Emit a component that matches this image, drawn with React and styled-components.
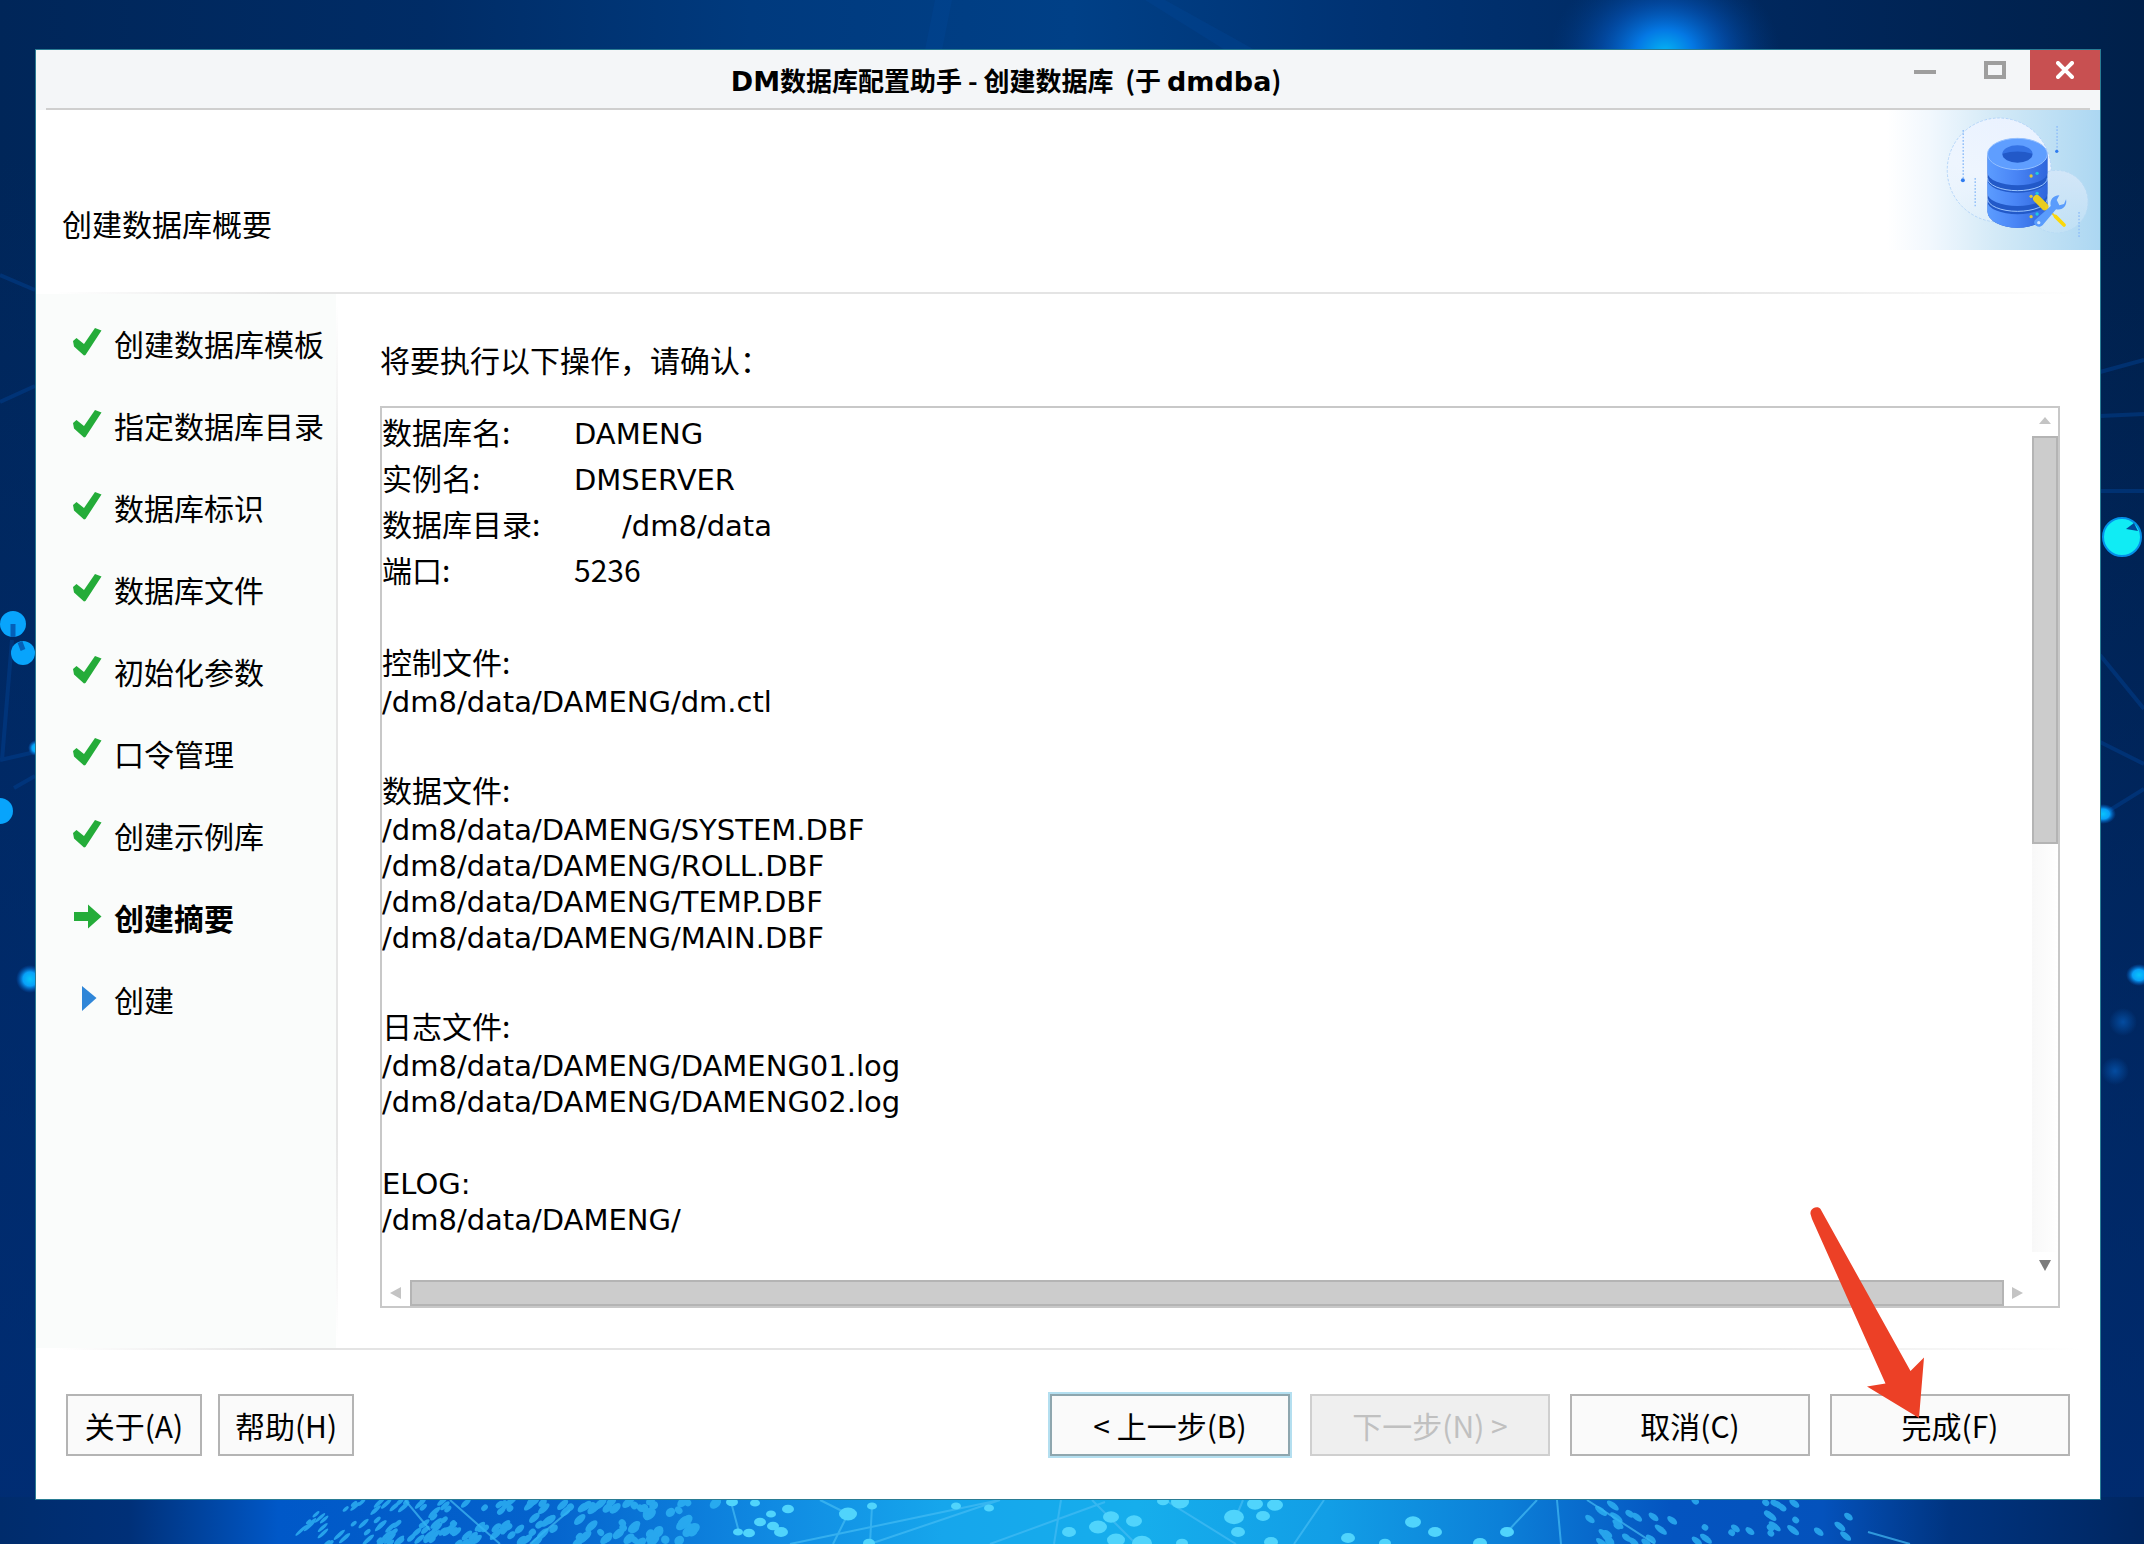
import React from 'react';
import styled, { createGlobalStyle, css } from 'styled-components';

const GlobalStyle = createGlobalStyle`
  * {
    box-sizing: border-box;
  }
  body {
    margin: 0;
    background-color: #00285f;
    font-family: 'Noto Sans CJK SC', sans-serif;
    font-size: 30px;
    color: #000;
  }
`;

const Desktop = styled.div`
  position: relative;
  display: flex;
  min-height: 100vh;
  padding: 49px 43px 44px 35px;
`;

const WallpaperSvg = styled.svg`
  position: absolute;
  inset: 0;
  width: 100%;
  height: 100%;
`;

const Window = styled.main`
  position: relative;
  flex: 1;
  min-width: 0;
  display: flex;
  flex-direction: column;
  border: 1px solid #2a7c93;
  background-color: #fff;
`;

const TitleBar = styled.header`
  background-color: #f4f6f8;
`;

const TitleRow = styled.div`
  display: flex;
  height: 58px;
`;

const Title = styled.h1`
  flex: 1;
  margin: 0;
  padding-left: 86px;
  font-size: 26px;
  font-weight: bold;
  line-height: 60px;
  text-align: center;
  white-space: pre;
`;

const TitleLatin = styled.span`
  font-family: 'DejaVu Sans', sans-serif;
  font-size: 27px;
`;

const TitleRule = styled.div`
  height: 2px;
  margin: 0 10px;
  background-color: #cfcfcf;
`;

const ControlButton = styled.button`
  display: flex;
  align-items: center;
  justify-content: center;
  width: 70px;
  height: 40px;
  padding: 0;
  border: 0;
  background-color: ${(props) => (props.$close ? '#c85051' : 'transparent')};
`;

const Header = styled.section`
  display: flex;
  justify-content: space-between;
  height: 182px;
  padding-left: 26px;
`;

const Heading = styled.h2`
  align-self: flex-end;
  margin: 0 0 47px;
  font-size: 30px;
  font-weight: normal;
  line-height: 44px;
`;

const Banner = styled.svg`
  width: 213px;
  height: 140px;
`;

const Divider = styled.div`
  height: 2px;
  background: linear-gradient(to right, transparent 1%, #e4e4e4 12%, #e4e4e4 80%, transparent 99%);
`;

const Body = styled.div`
  flex: 1;
  display: flex;
`;

const Sidebar = styled.nav`
  width: 300px;
  padding-top: 8px;
  background-color: #fafcfb;
`;

const SidebarRule = styled.div`
  width: 2px;
  background: linear-gradient(to bottom, transparent 1%, #e6e6e6 20%, #e6e6e6 80%, transparent 99%);
`;

const StepList = styled.ol`
  margin: 0;
  padding: 0;
  list-style: none;
`;

const Step = styled.li`
  display: flex;
  align-items: center;
  gap: 12px;
  height: 82px;
  padding-left: 36px;
  font-weight: ${(props) => (props.$current ? 'bold' : 'normal')};
  white-space: nowrap;
`;

const StepIcon = styled.svg`
  width: 30px;
  height: 30px;
  margin-bottom: 2px;
`;

const Content = styled.section`
  flex: 1;
  min-width: 0;
  display: flex;
  flex-direction: column;
  gap: 25px;
  padding: 43px 40px 40px 42px;
`;

const Prompt = styled.p`
  margin: 0;
  line-height: 44px;
`;

const SummaryBox = styled.div`
  flex: 1;
  display: grid;
  grid-template-columns: 1fr 26px;
  grid-template-rows: 1fr 26px;
  border: 2px solid #c8c8c8;
`;

const SummaryText = styled.div`
  overflow: hidden;
  outline: none;
`;

const Line = styled.div`
  height: 46px;
  line-height: 46px;
  white-space: pre;
  tab-size: 48px;
`;

const PathLine = styled(Line)`
  height: 36px;
  line-height: 36px;
  font-family: 'DejaVu Sans', sans-serif;
  font-size: 29px;
`;

const Value = styled.span`
  font-family: 'DejaVu Sans', sans-serif;
  font-size: 29px;
`;

const ScrollBar = styled.div`
  display: flex;
  flex-direction: ${(props) => (props.$vertical ? 'column' : 'row')};
`;

const ScrollTrack = styled.div`
  flex: 1;
  background: ${(props) =>
    props.$vertical ? 'linear-gradient(to right, #f8f8f8, #fff)' : '#fff'};
`;

const ScrollThumb = styled.div`
  width: ${(props) => (props.$vertical ? '100%' : `${props.$size}%`)};
  height: ${(props) => (props.$vertical ? `${props.$size}%` : '100%')};
  border: 2px solid #b4b4b4;
  background-color: #cccccc;
`;

const ScrollButton = styled.button`
  display: flex;
  align-items: center;
  justify-content: center;
  width: ${(props) => (props.$vertical ? '26px' : '28px')};
  height: ${(props) => (props.$vertical ? '28px' : '26px')};
  padding: 0;
  border: 0;
  background: none;
`;

const Footer = styled.footer`
  display: flex;
  justify-content: space-between;
  padding: 44px 30px 43px;
`;

const ButtonGroup = styled.div`
  display: flex;
  gap: ${(props) => props.$gap};
`;

const FooterButton = styled.button`
  width: ${(props) => (props.$wide ? '240px' : '136px')};
  height: 62px;
  padding: 0;
  border: 2px solid #b4b4b4;
  background-color: #fafafa;
  font-family: inherit;
  font-size: 30px;
  line-height: 44px;
  color: #000;
  white-space: nowrap;
  ${(props) =>
    props.$focused &&
    css`
      border-color: #8ea6ae;
      box-shadow: 0 0 0 2px #b4dff0;
    `}
  &:disabled {
    border-color: #cfcfcf;
    background-color: #efefef;
    color: #c0c0c0;
  }
`;

const Pointed = styled.div`
  position: relative;
`;

const PointerArrow = styled.svg`
  position: absolute;
  left: -30px;
  bottom: 36px;
  width: 130px;
  height: 220px;
  pointer-events: none;
`;

const steps = [
  { label: '创建数据库模板', state: 'done' },
  { label: '指定数据库目录', state: 'done' },
  { label: '数据库标识', state: 'done' },
  { label: '数据库文件', state: 'done' },
  { label: '初始化参数', state: 'done' },
  { label: '口令管理', state: 'done' },
  { label: '创建示例库', state: 'done' },
  { label: '创建摘要', state: 'current' },
  { label: '创建', state: 'next' },
];

const summary = [
  { label: '数据库名:\t\t', value: 'DAMENG' },
  { label: '实例名:\t\t', value: 'DMSERVER' },
  { label: '数据库目录:\t\t', value: '/dm8/data' },
  { label: '端口:\t\t\t5236' },
  { label: '' },
  { label: '控制文件:' },
  { path: '/dm8/data/DAMENG/dm.ctl' },
  { label: '' },
  { label: '数据文件:' },
  { path: '/dm8/data/DAMENG/SYSTEM.DBF' },
  { path: '/dm8/data/DAMENG/ROLL.DBF' },
  { path: '/dm8/data/DAMENG/TEMP.DBF' },
  { path: '/dm8/data/DAMENG/MAIN.DBF' },
  { label: '' },
  { label: '日志文件:' },
  { path: '/dm8/data/DAMENG/DAMENG01.log' },
  { path: '/dm8/data/DAMENG/DAMENG02.log' },
  { label: '' },
  { path: 'ELOG:' },
  { path: '/dm8/data/DAMENG/' },
];

const stepShapes = {
  done: <path d="M1 14 4.500 11 12 17 23 1 29.500 3.500 13.500 28 12 28.500 2 19.500Z" fill="#24ac39" />,
  current: <path d="M2 11H16V3.500L29.500 15.500 16 27.500V20H2Z" fill="#24ac39" />,
  next: <path d="M10 3 24.500 15 10 28Z" fill="#2f86d8" />,
};

const triangles = {
  up: 'M6 1 12 8H0Z',
  down: 'M0 0H12L6 11Z',
  left: 'M0 6 11 0V12Z',
  right: 'M11 6 0 0V12Z',
};

const Triangle = ({ dir, color }) => (
  <svg width="12" height="12" viewBox="0 0 12 12">
    <path d={triangles[dir]} fill={color} />
  </svg>
);

// cx, cy, rx of the bright nodes along the bottom edge
const nodes = [
  [732, 1502, 6], [755, 1503, 5], [771, 1514, 5], [788, 1509, 6], [760, 1522, 6],
  [773, 1526, 6], [738, 1532, 5], [749, 1533, 6], [781, 1532, 7], [848, 1514, 9],
  [872, 1506, 5], [869, 1543, 6], [956, 1506, 5], [989, 1508, 5], [1069, 1532, 7],
  [1098, 1527, 9], [1111, 1517, 8], [1134, 1521, 8], [1116, 1540, 9], [1142, 1543, 10],
  [1163, 1501, 6], [1180, 1502, 9], [1182, 1543, 6], [1234, 1517, 10], [1255, 1504, 8],
  [1275, 1505, 8], [1263, 1516, 7], [1238, 1532, 7], [1271, 1542, 7], [1413, 1522, 8],
  [1435, 1532, 7], [1348, 1538, 7], [1385, 1543, 6], [1480, 1543, 7], [1507, 1532, 7],
];

// flattened specks that crowd towards both ends of the globe
const random = (n) => {
  const v = Math.sin(n * 127.1 + 11.7) * 43758.5453;
  return v - Math.floor(v);
};

const specks = Array.from({ length: 215 }, (_, i) => {
  const left = i % 5 !== 0;
  const y = 1500 + random(i + 500) * 46;
  const spread = random(i);
  return {
    left,
    y,
    x: left ? 325 - (y - 1500) + spread * 400 : 1580 + spread * 270,
    rx: 3 + random(i + 900) * 5,
    ry: left ? 1.5 + spread * 3 : 3,
  };
});

const Wallpaper = () => (
  <WallpaperSvg viewBox="0 0 2144 1544" preserveAspectRatio="none" aria-hidden="true">
    <defs>
      <linearGradient id="sky" x1="0" x2="1" y1="0" y2="0">
        <stop offset="0" stopColor="#002659" />
        <stop offset=".2" stopColor="#002c66" />
        <stop offset=".35" stopColor="#003a7e" />
        <stop offset=".5" stopColor="#004087" />
        <stop offset=".63" stopColor="#003374" />
        <stop offset=".85" stopColor="#00265a" />
        <stop offset="1" stopColor="#00204a" />
      </linearGradient>
      <linearGradient id="deep" x1="0" x2="0" y1="0" y2="1">
        <stop offset=".1" stopColor="#003080" stopOpacity="0" />
        <stop offset="1" stopColor="#003080" stopOpacity=".7" />
      </linearGradient>
      <radialGradient id="flare">
        <stop offset="0" stopColor="#04b4f4" />
        <stop offset=".25" stopColor="#0478e4" />
        <stop offset=".55" stopColor="#0458c0" stopOpacity=".6" />
        <stop offset="1" stopColor="#003a86" stopOpacity="0" />
      </radialGradient>
      <radialGradient id="spark">
        <stop offset="0" stopColor="#08c4fc" />
        <stop offset=".5" stopColor="#08a0f8" />
        <stop offset="1" stopColor="#0460d0" stopOpacity="0" />
      </radialGradient>
      <radialGradient id="haze">
        <stop offset="0" stopColor="#044ca0" />
        <stop offset="1" stopColor="#044ca0" stopOpacity="0" />
      </radialGradient>
      <linearGradient id="globe" x1="0" x2="1" y1="0" y2="0">
        <stop offset="0" stopColor="#002c6c" />
        <stop offset=".06" stopColor="#003078" />
        <stop offset=".13" stopColor="#0058c8" />
        <stop offset=".25" stopColor="#0462cc" />
        <stop offset=".36" stopColor="#108ae2" />
        <stop offset=".44" stopColor="#16a6ec" />
        <stop offset=".53" stopColor="#16aeec" />
        <stop offset=".62" stopColor="#129ee6" />
        <stop offset=".7" stopColor="#0c80d8" />
        <stop offset=".78" stopColor="#0454c0" />
        <stop offset=".85" stopColor="#0452bc" />
        <stop offset=".91" stopColor="#003480" />
        <stop offset="1" stopColor="#002660" />
      </linearGradient>
    </defs>
    <rect width="2144" height="1544" fill="url(#sky)" />
    <rect width="2144" height="1544" fill="url(#deep)" />
    <path d="M925 50 935 0H952L942 50ZM1145 0H1165L1255 50H1225Z" fill="#00489a" opacity=".3" />
    <ellipse cx="1665" cy="52" rx="115" ry="90" fill="url(#flare)" />
    <rect y="1497" width="2144" height="47" fill="url(#globe)" />
    <g stroke="#003f90" strokeWidth="4" fill="none" opacity=".5">
      <path d="M0 275 35 290M0 402 35 386M12 640 2 760M0 760 35 752M14 788 35 776" />
      <path d="M2100 416 2144 414M2100 372 2144 360M2100 491 2144 491M2100 655 2144 709M2100 742 2144 764M2102 815 2144 789" />
    </g>
    <g fill="#08a4fc">
      <circle cx="13" cy="624" r="13" />
      <circle cx="23" cy="653" r="12" />
      <circle cx="0" cy="811" r="13" />
    </g>
    <circle cx="36" cy="748" r="8" fill="url(#spark)" />
    <circle cx="30" cy="979" r="14" fill="url(#spark)" />
    <path d="M13 637V624M23 650 20 642" stroke="#0460b8" strokeWidth="5" fill="none" />
    <circle cx="2122" cy="537" r="19" fill="#10ecf4" stroke="#0490e8" strokeWidth="2" />
    <path d="M2126 529 2138 531 2134 523Z" fill="#00489a" />
    <ellipse cx="2103" cy="814" rx="13" ry="10" fill="url(#spark)" />
    <ellipse cx="2139" cy="975" rx="13" ry="11" fill="url(#spark)" />
    <circle cx="2123" cy="1022" r="14" fill="url(#haze)" />
    <circle cx="2115" cy="1071" r="14" fill="url(#haze)" />
    <g stroke="#44bcf4" strokeWidth="2" fill="none" opacity=".7">
      <path d="M405 1500 430 1530M450 1500 500 1544M570 1510 530 1544M731 1502 739 1532M820 1500 848 1514M848 1514 833 1544M872 1506 870 1544" />
      <path d="M1000 1500 790 1544M1000 1500 870 1544M1061 1500 1054 1544M1105 1502 990 1544M1092 1500 1136 1544M1165 1500 1236 1544" />
      <path d="M1324 1500 1294 1544M1243 1500 1236 1517M1537 1500 1507 1532M1557 1500 1561 1544M1587 1500 1655 1544M1868 1532 1910 1544" />
    </g>
    <g fill="#30b4f4" opacity=".8">
      {specks.map((s, i) => (
        <ellipse
          key={i}
          cx={s.x}
          cy={s.y}
          rx={s.rx}
          ry={s.ry}
          transform={`rotate(${s.left ? -42 : 38} ${s.x} ${s.y})`}
        />
      ))}
    </g>
    <g fill="#50d4fc">
      {nodes.map(([x, y, r]) => (
        <ellipse key={`${x}-${y}`} cx={x} cy={y} rx={r} ry={r * 0.72} />
      ))}
    </g>
  </WallpaperSvg>
);

const DatabaseBanner = () => (
  <Banner viewBox="0 0 640 420" preserveAspectRatio="none" aria-hidden="true">
    <defs>
      <linearGradient id="fade" x1="0" x2="1" y1="0" y2="0">
        <stop offset="0" stopColor="#fff" />
        <stop offset=".2" stopColor="#f2f8fe" />
        <stop offset=".5" stopColor="#d4eaf7" />
        <stop offset="1" stopColor="#acd7f2" />
      </linearGradient>
      <linearGradient id="disc" x1=".7" x2=".2" y1="0" y2="1">
        <stop offset="0" stopColor="#eaf2ff" />
        <stop offset=".6" stopColor="#eef5fe" />
        <stop offset="1" stopColor="#eef5fe" stopOpacity=".1" />
      </linearGradient>
      <linearGradient id="smallDisc" x1=".6" x2=".4" y1="0" y2="1">
        <stop offset="0" stopColor="#d2e6f8" />
        <stop offset="1" stopColor="#d2e8f8" stopOpacity=".3" />
      </linearGradient>
      <linearGradient id="drum" x1="0" x2="1" y1="0" y2="0">
        <stop offset="0" stopColor="#5c9cff" />
        <stop offset=".45" stopColor="#4a86f6" />
        <stop offset="1" stopColor="#2f66dc" />
      </linearGradient>
    </defs>
    <rect width="640" height="420" fill="url(#fade)" />
    <circle cx="337" cy="180" r="156" fill="url(#disc)" stroke="#b4d4f8" strokeWidth="3" strokeDasharray="8 5" />
    <circle cx="510" cy="275" r="94" fill="url(#smallDisc)" stroke="#b8daf4" strokeWidth="3" strokeDasharray="8 5" />
    <g stroke="#8cbcf8" strokeWidth="4" strokeDasharray="5 5">
      <path d="M229 60V210M265 204V294M511 48V122M577 306V386" />
    </g>
    <circle cx="228" cy="211" r="6" fill="#2f7cf0" />
    <circle cx="510" cy="124" r="5" fill="#2f7cf0" />
    <path d="M302 134V305A90 48 0 0 0 482 305V134Z" fill="#2259c8" />
    <path d="M302 275V305A90 48 0 0 0 482 305V275A90 38 0 0 1 302 275Z" fill="url(#drum)" />
    <path d="M302 210V250A90 38 0 0 0 482 250V210A90 38 0 0 1 302 210Z" fill="url(#drum)" />
    <path d="M302 134V188A90 38 0 0 0 482 188V134Z" fill="url(#drum)" />
    <g fill="none" stroke="#9cc6ff" strokeWidth="3">
      <path d="M302 204A90 38 0 0 0 482 204M302 266A90 38 0 0 0 482 266" />
    </g>
    <ellipse cx="392" cy="132" rx="90" ry="47" fill="#5f9eff" stroke="#94c0ff" strokeWidth="3" />
    <ellipse cx="392" cy="133" rx="45" ry="25" fill="#2259c8" />
    <path d="M347 131A45 25 0 0 1 437 131Q392 118 347 131Z" fill="#3472e4" />
    <g fill="#e0c838">
      <circle cx="433" cy="198" r="5" />
      <circle cx="433" cy="259" r="5" />
      <circle cx="433" cy="320" r="5" />
    </g>
    <g fill="#20c8e0">
      <circle cx="451" cy="190" r="5" />
      <circle cx="451" cy="250" r="5" />
      <circle cx="451" cy="312" r="5" />
    </g>
    <path d="M450 266 474 290" stroke="#e8cc20" strokeWidth="22" strokeLinecap="round" />
    <path d="M476 290 506 320" stroke="#f0d020" strokeWidth="6" />
    <path d="M506 319 532 345" stroke="#fcd808" strokeWidth="11" strokeLinecap="round" />
    <path
      d="M444 331 492 288C488 272 498 256 518 256L510 270 518 286 532 282 538 268C542 288 528 302 508 298L468 345C456 358 436 344 444 331Z"
      fill="#5a9cfc"
    />
    <circle cx="456" cy="338" r="5" fill="#cfe4ff" />
  </Banner>
);

const App = () => {
  return (
    <>
      <GlobalStyle />
      <Desktop>
        <Wallpaper />
        <Window>
          <TitleBar>
            <TitleRow>
              <Title>
                <TitleLatin>DM</TitleLatin>
                数据库配置助手 - 创建数据库 {' (于 '}
                <TitleLatin>dmdba</TitleLatin>)
              </Title>
              <ControlButton aria-label="最小化">
                <svg width="22" height="18" viewBox="0 0 22 18">
                  <path d="M0 11H22" stroke="#9e9e9e" strokeWidth="4" />
                </svg>
              </ControlButton>
              <ControlButton aria-label="最大化">
                <svg width="22" height="18" viewBox="0 0 22 18">
                  <rect x="2" y="2" width="18" height="14" fill="none" stroke="#9e9e9e" strokeWidth="4" />
                </svg>
              </ControlButton>
              <ControlButton $close aria-label="关闭">
                <svg width="18" height="18" viewBox="0 0 18 18">
                  <path d="M2 2 16 16M16 2 2 16" stroke="#fff" strokeWidth="4" strokeLinecap="round" />
                </svg>
              </ControlButton>
            </TitleRow>
            <TitleRule />
          </TitleBar>
          <Header>
            <Heading>创建数据库概要</Heading>
            <DatabaseBanner />
          </Header>
          <Divider />
          <Body>
            <Sidebar>
              <StepList>
                {steps.map((step) => (
                  <Step key={step.label} $current={step.state === 'current'}>
                    <StepIcon viewBox="0 0 30 30" aria-hidden="true">
                      {stepShapes[step.state]}
                    </StepIcon>
                    {step.label}
                  </Step>
                ))}
              </StepList>
            </Sidebar>
            <SidebarRule />
            <Content>
              <Prompt id="prompt">将要执行以下操作，请确认：</Prompt>
              <SummaryBox>
                <SummaryText role="textbox" aria-multiline="true" aria-readonly="true" aria-labelledby="prompt" tabIndex={0}>
                  {summary.map((line, i) =>
                    line.path ? (
                      <PathLine key={i}>{line.path}</PathLine>
                    ) : (
                      <Line key={i}>
                        {line.label}
                        {line.value && <Value>{line.value}</Value>}
                      </Line>
                    )
                  )}
                </SummaryText>
                <ScrollBar $vertical>
                  <ScrollButton $vertical aria-label="向上滚动">
                    <Triangle dir="up" color="#c4c4c4" />
                  </ScrollButton>
                  <ScrollTrack $vertical>
                    <ScrollThumb $vertical $size={50} />
                  </ScrollTrack>
                  <ScrollButton $vertical aria-label="向下滚动">
                    <Triangle dir="down" color="#7c7c7c" />
                  </ScrollButton>
                </ScrollBar>
                <ScrollBar>
                  <ScrollButton aria-label="向左滚动">
                    <Triangle dir="left" color="#c4c4c4" />
                  </ScrollButton>
                  <ScrollTrack>
                    <ScrollThumb $size={100} />
                  </ScrollTrack>
                  <ScrollButton aria-label="向右滚动">
                    <Triangle dir="right" color="#c4c4c4" />
                  </ScrollButton>
                </ScrollBar>
              </SummaryBox>
            </Content>
          </Body>
          <Divider />
          <Footer>
            <ButtonGroup $gap="16px">
              <FooterButton>关于(A)</FooterButton>
              <FooterButton>帮助(H)</FooterButton>
            </ButtonGroup>
            <ButtonGroup $gap="20px">
              <FooterButton $wide $focused>{'< 上一步(B)'}</FooterButton>
              <FooterButton $wide disabled>{'下一步(N) >'}</FooterButton>
              <FooterButton $wide>取消(C)</FooterButton>
              <Pointed>
                <FooterButton $wide>完成(F)</FooterButton>
                <PointerArrow viewBox="0 0 130 220" aria-hidden="true">
                  <path
                    d="M10.500 14C9.500 8 18 5 20.500 9L110.500 171 124 157.500 119 218 67 186.500 85.500 183.500 12 19Z"
                    fill="#ec4026"
                  />
                </PointerArrow>
              </Pointed>
            </ButtonGroup>
          </Footer>
        </Window>
      </Desktop>
    </>
  );
};

export default App;
